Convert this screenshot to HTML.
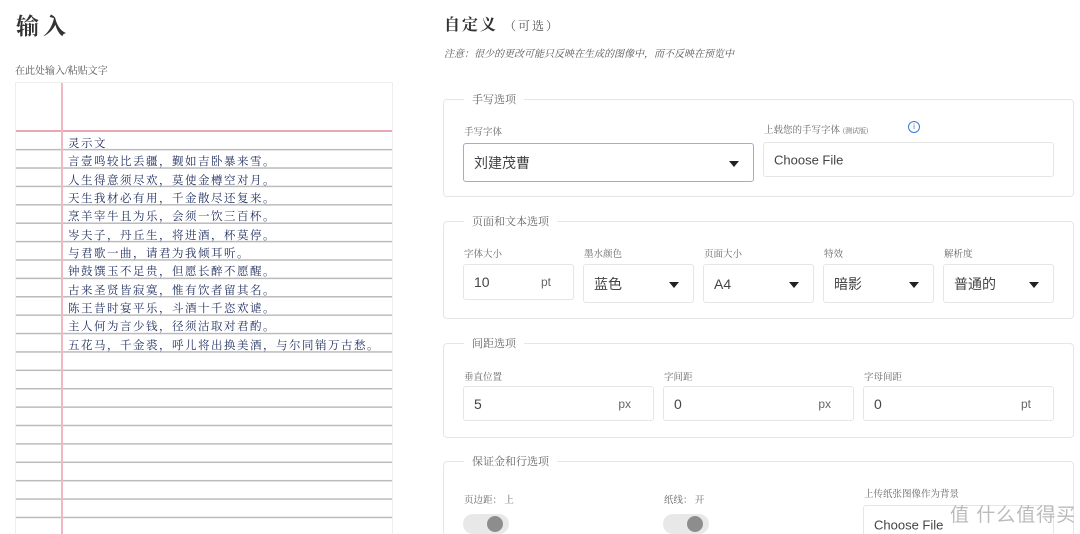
<!DOCTYPE html>
<html><head><meta charset="utf-8"><style>
*{margin:0;padding:0;box-sizing:border-box}
html,body{width:1080px;height:534px;overflow:hidden}
body{background:#fff;position:relative;font-family:"Liberation Sans","Noto Sans CJK SC",sans-serif;color:#333}
.a{position:absolute}
.serif{font-family:"Liberation Serif","Noto Serif CJK SC",serif}
.paper{left:15px;top:82px;width:378px;height:460px;border:1px solid #eee;
background:repeating-linear-gradient(to bottom,transparent 0,transparent 16.9px,#bbb 16.9px,#bbb 18.4px);background-position:0 49px;background-repeat:repeat-y;background-size:100% 18.4px}
.paper .top{position:absolute;left:0;top:0;width:100%;height:49px;background:#fff;border-bottom:2px solid #e9a8b4}
.paper .vl{position:absolute;left:45px;top:0;width:2px;height:100%;background:#f0b8c2}
.hw{position:absolute;left:52px;font-size:11.5px;color:#1f2d5e;font-family:"Noto Serif CJK SC",serif;letter-spacing:1.5px;white-space:nowrap}
.fs{position:absolute;left:443px;width:631px;border:1px solid #e6e6e6;border-radius:4px}
.lg{position:absolute;top:-9px;left:20px;background:#fff;padding:0 8px;font-size:11px;color:#666;font-family:"Noto Serif CJK SC",serif}
.lb{position:absolute;font-size:9.5px;color:#666;font-family:"Noto Serif CJK SC",serif}
.bx{position:absolute;border:1px solid #e6e6e6;border-radius:3px;background:#fff;font-size:14px;color:#444}
.bx span{position:absolute;left:10px;top:50%;transform:translateY(-50%)}
.bx i{position:absolute;right:14px;top:50%;transform:translateY(-50%);font-style:normal;font-size:12px;color:#666}
.tri{position:absolute;right:14px;top:50%;margin-top:-2px;width:0;height:0;border-left:5px solid transparent;border-right:5px solid transparent;border-top:6px solid #222}
.tg{position:absolute;width:46px;height:20px;border-radius:10px;background:#e8e8e8}
.tg::after{content:"";position:absolute;right:6px;top:2px;width:16px;height:16px;border-radius:50%;background:#8d8d8d}
</style></head><body>
<div class="a serif" style="left:16px;top:8px;font-size:23px;font-weight:bold;color:#333;letter-spacing:4px">输入</div>
<div class="a serif" style="left:15px;top:62px;font-size:10px;color:#555">在此处输入/粘贴文字</div>
<div class="a paper"><div class="top"></div><div class="vl"></div>
<div class="hw" style="top:52px">灵示文</div>
<div class="hw" style="top:70px">言壹鸣较比丢疆，觐如吉卧暴来雪。</div>
<div class="hw" style="top:89px">人生得意须尽欢，莫使金樽空对月。</div>
<div class="hw" style="top:107px">天生我材必有用，千金散尽还复来。</div>
<div class="hw" style="top:125px">烹羊宰牛且为乐，会须一饮三百杯。</div>
<div class="hw" style="top:144px">岑夫子，丹丘生，将进酒，杯莫停。</div>
<div class="hw" style="top:162px">与君歌一曲，请君为我倾耳听。</div>
<div class="hw" style="top:180px">钟鼓馔玉不足贵，但愿长醉不愿醒。</div>
<div class="hw" style="top:199px">古来圣贤皆寂寞，惟有饮者留其名。</div>
<div class="hw" style="top:217px">陈王昔时宴平乐，斗酒十千恣欢谑。</div>
<div class="hw" style="top:235px">主人何为言少钱，径须沽取对君酌。</div>
<div class="hw" style="top:254px">五花马，千金裘，呼儿将出换美酒，与尔同销万古愁。</div>
</div>

<div class="a serif" style="left:444px;top:12px;font-size:16px;font-weight:bold;color:#333;letter-spacing:2px">自定义 <span style="font-size:12px;font-weight:normal;color:#555">（可选）</span></div>
<div class="a serif" style="left:444px;top:45px;font-size:10px;color:#555;font-style:italic">注意：很少的更改可能只反映在生成的图像中，而不反映在预览中</div>

<div class="fs" style="top:99px;height:98px"><div class="lg">手写选项</div></div>
<div class="lb" style="left:464px;top:124px">手写字体</div>
<div class="lb" style="left:764px;top:122px">上载您的手写字体 <span style="font-size:7px">(测试版)</span></div>
<div class="a" style="left:908px;top:121px;width:12px;height:12px;border:1.2px solid #3a7bd5;border-radius:50%;font-size:8px;color:#3a7bd5;text-align:center;line-height:10px">i</div>
<div class="bx" style="left:463px;top:143px;width:291px;height:39px;border:1.5px solid #8fb3e0"><span>刘建茂曹</span><div class="tri"></div></div>
<div class="bx" style="left:763px;top:142px;width:291px;height:35px;font-size:13px"><span>Choose File</span></div>

<div class="fs" style="top:221px;height:98px"><div class="lg">页面和文本选项</div></div>
<div class="lb" style="left:464px;top:246px">字体大小</div>
<div class="lb" style="left:584px;top:246px">墨水颜色</div>
<div class="lb" style="left:704px;top:246px">页面大小</div>
<div class="lb" style="left:824px;top:246px">特效</div>
<div class="lb" style="left:944px;top:246px">解析度</div>
<div class="bx" style="left:463px;top:264px;width:111px;height:36px"><span>10</span><i style="right:22px">pt</i></div>
<div class="bx" style="left:583px;top:264px;width:111px;height:39px"><span>蓝色</span><div class="tri"></div></div>
<div class="bx" style="left:703px;top:264px;width:111px;height:39px"><span>A4</span><div class="tri"></div></div>
<div class="bx" style="left:823px;top:264px;width:111px;height:39px"><span>暗影</span><div class="tri"></div></div>
<div class="bx" style="left:943px;top:264px;width:111px;height:39px"><span>普通的</span><div class="tri"></div></div>

<div class="fs" style="top:343px;height:95px"><div class="lg">间距选项</div></div>
<div class="lb" style="left:464px;top:369px">垂直位置</div>
<div class="lb" style="left:664px;top:369px">字间距</div>
<div class="lb" style="left:864px;top:369px">字母间距</div>
<div class="bx" style="left:463px;top:386px;width:191px;height:35px"><span>5</span><i style="right:22px">px</i></div>
<div class="bx" style="left:663px;top:386px;width:191px;height:35px"><span>0</span><i style="right:22px">px</i></div>
<div class="bx" style="left:863px;top:386px;width:191px;height:35px"><span>0</span><i style="right:22px">pt</i></div>

<div class="fs" style="top:461px;height:90px"><div class="lg">保证金和行选项</div></div>
<div class="lb" style="left:464px;top:492px">页边距： 上</div>
<div class="lb" style="left:664px;top:492px">纸线： 开</div>
<div class="lb" style="left:864px;top:486px">上传纸张图像作为背景</div>
<div class="tg" style="left:463px;top:514px"></div>
<div class="tg" style="left:663px;top:514px"></div>
<div class="bx" style="left:863px;top:505px;width:191px;height:40px;font-size:13px"><span>Choose File</span></div>
<div class="a" style="left:950px;top:500px;font-size:19px;color:rgba(170,170,170,0.8);letter-spacing:1px">值 什么值得买</div>
</body></html>
